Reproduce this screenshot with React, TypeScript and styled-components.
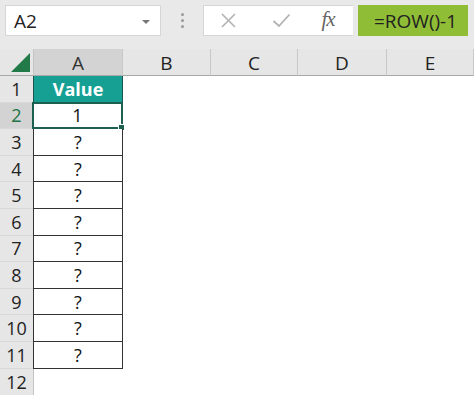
import React from "react";
import styled, { createGlobalStyle } from "styled-components";

const Global = createGlobalStyle`
  html, body { margin: 0; padding: 0; background: #ffffff; }
  body { font-family: "Open Sans", "Noto Sans", sans-serif; overflow: hidden; }
`;

const Page = styled.div`
  width: 474px;
  height: 395px;
  overflow: hidden;
  background: #ffffff;
`;

const Bar = styled.div`
  height: 49px;
  box-sizing: border-box;
  background: #e9e9e9;
  padding: 5px 6px 13px 5px;
  display: flex;
  align-items: stretch;
`;

const NameBox = styled.div`
  width: 156px;
  box-sizing: border-box;
  background: #fff;
  border: 1px solid #d6d6d6;
  display: flex;
  align-items: center;
  padding: 0 10px 0 8px;
  font-size: 19px;
  color: #222;
  justify-content: space-between;
`;

const Caret = styled.span`
  width: 0;
  height: 0;
  border-left: 4px solid transparent;
  border-right: 4px solid transparent;
  border-top: 4px solid #777;
  margin-top: 2px;
`;

const Splitter = styled.div`
  width: 42px;
  display: flex;
  flex-direction: column;
  align-items: center;
  justify-content: center;
  gap: 3px;
`;

const Dot = styled.span`
  width: 3px;
  height: 3px;
  border-radius: 50%;
  background: #9a9a9a;
`;

const FormulaTools = styled.div`
  width: 150px;
  box-sizing: border-box;
  background: #fff;
  border: 1px solid #d6d6d6;
  border-right: none;
  display: flex;
  align-items: center;
  padding-left: 15px;
`;

const ToolIcon = styled.span<{ $w: number; $ml?: number }>`
  width: ${(p) => p.$w}px;
  margin-left: ${(p) => p.$ml ?? 0}px;
  display: flex;
  justify-content: center;
  align-items: center;
`;

const Fx = styled.span`
  font-family: "Liberation Serif", "DejaVu Serif", serif;
  font-style: italic;
  font-size: 21px;
  color: #666;
  letter-spacing: -1px;
  margin-top: -3px;
`;

const Formula = styled.div`
  flex: 1;
  margin-left: 5px;
  background: #8fbd35;
  display: flex;
  align-items: center;
  padding-left: 16px;
  font-size: 19px;
  color: #222;
`;

const Grid = styled.div`
  display: grid;
  grid-template-columns: 34px 89px 88px 87px 89px 87px;
  grid-template-rows: 27px repeat(11, 26.6px) 27px;
`;

const Corner = styled.div`
  background: #e6e6e6;
  border-right: 1px solid #c4c4c4;
  border-bottom: 1px solid #a8a8a8;
  display: flex;
  align-items: flex-end;
  justify-content: flex-end;
  padding: 0 3px 3px 0;
`;

const ColHead = styled.div<{ $active?: boolean }>`
  background: ${(p) => (p.$active ? "#d3d3d3" : "#e6e6e6")};
  border-right: 1px solid #c8c8c8;
  border-bottom: 1px solid #a8a8a8;
  display: flex;
  align-items: center;
  justify-content: center;
  font-size: 19px;
  color: ${(p) => (p.$active ? "#333" : "#222")};
  padding-top: 1px;
`;

const RowHead = styled.div<{ $active?: boolean }>`
  background: ${(p) => (p.$active ? "#d3d3d3" : "#e6e6e6")};
  border-right: 1px solid #c4c4c4;
  border-bottom: 1px solid #d8d8d8;
  display: flex;
  align-items: center;
  justify-content: center;
  font-size: 18px;
  color: ${(p) => (p.$active ? "#217346" : "#222")};
`;

const HeaderCell = styled.div`
  background: #16a094;
  color: #fff;
  font-weight: 700;
  font-size: 18px;
  display: flex;
  align-items: center;
  justify-content: center;
  border-right: 1px solid #1f5350;
  border-bottom: 1px solid #1f5350;
  margin-left: -1px;
  border-left: 1px solid #1f5350;
`;

const DataCell = styled.div<{ $selected?: boolean }>`
  position: relative;
  background: #fff;
  display: flex;
  align-items: center;
  justify-content: center;
  font-size: 18px;
  color: #111;
  margin-left: -1px;
  border-left: 1px solid #333;
  border-right: 1px solid #333;
  border-bottom: 1px solid #333;
  ${(p) =>
    p.$selected &&
    `
    border: 2px solid #1d5f50;
    margin-top: -1px;
    margin-left: -2px;
  `}
`;

const Handle = styled.span`
  position: absolute;
  right: -4px;
  bottom: -4px;
  width: 5px;
  height: 5px;
  background: #1d5f50;
  border: 1px solid #fff;
`;

const Empty = styled.div`
  background: #fff;
`;

const cols = ["A", "B", "C", "D", "E"];

export default function App() {
  const rows = Array.from({ length: 12 }, (_, i) => i + 1);
  return (
    <Page>
      <Global />
      <Bar>
        <NameBox>
          <span>A2</span>
          <Caret />
        </NameBox>
        <Splitter>
          <Dot />
          <Dot />
          <Dot />
        </Splitter>
        <FormulaTools>
          <ToolIcon $w={18}>
            <svg width="17" height="17" viewBox="0 0 17 17">
              <path d="M2 2 L15 15 M15 2 L2 15" stroke="#b3b3b3" strokeWidth="1.6" fill="none" />
            </svg>
          </ToolIcon>
          <ToolIcon $w={20} $ml={34}>
            <svg width="19" height="15" viewBox="0 0 19 15">
              <path d="M1.5 8 L7 13 L17.5 1.5" stroke="#b3b3b3" strokeWidth="1.8" fill="none" />
            </svg>
          </ToolIcon>
          <ToolIcon $w={20} $ml={27}>
            <Fx>fx</Fx>
          </ToolIcon>
        </FormulaTools>
        <Formula>=ROW()-1</Formula>
      </Bar>
      <Grid>
        <Corner>
          <svg width="19" height="19" viewBox="0 0 19 19">
            <polygon points="19,0 19,19 0,19" fill="#227a48" />
          </svg>
        </Corner>
        {cols.map((c) => (
          <ColHead key={c} $active={c === "A"}>
            {c}
          </ColHead>
        ))}
        {rows.map((r) => (
          <React.Fragment key={r}>
            <RowHead $active={r === 2}>{r}</RowHead>
            {r === 1 ? (
              <HeaderCell>Value</HeaderCell>
            ) : r === 2 ? (
              <DataCell $selected>
                1
                <Handle />
              </DataCell>
            ) : r <= 11 ? (
              <DataCell>?</DataCell>
            ) : (
              <Empty />
            )}
            <Empty />
            <Empty />
            <Empty />
            <Empty />
          </React.Fragment>
        ))}
      </Grid>
    </Page>
  );
}
